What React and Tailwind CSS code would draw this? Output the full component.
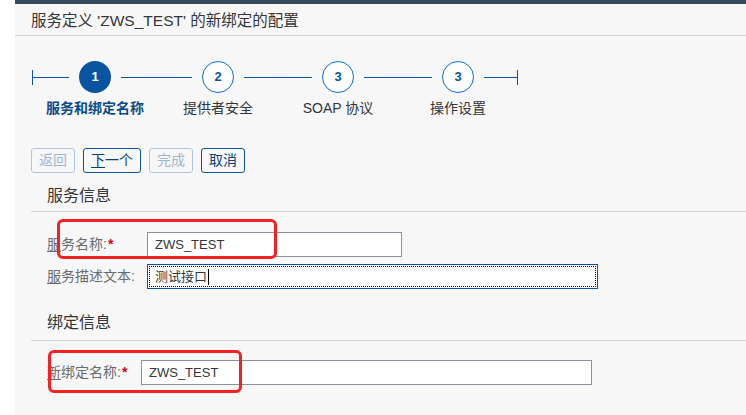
const FONT = { fontFamily: '"Liberation Sans", "Noto Sans CJK SC", sans-serif' };

const STEPS = [
  { n: '1', label: '服务和绑定名称', active: true },
  { n: '2', label: '提供者安全' },
  { n: '3', label: 'SOAP 协议' },
  { n: '3', label: '操作设置' },
];

function Line({ w }) {
  return (
    <div className="h-[32px] flex items-center" style={{ width: w }}>
      <div className="h-px w-full bg-[#0854a0]" />
    </div>
  );
}

function Step({ step }) {
  return (
    <div className="w-[32px] flex flex-col items-center mx-[10px]">
      <div
        className={
          step.active
            ? 'w-[32px] h-[32px] rounded-full bg-[#0854a0] text-white flex items-center justify-center text-[13px] font-bold'
            : 'w-[32px] h-[32px] rounded-full bg-white border border-[#0a6ed1] text-[#0854a0] flex items-center justify-center text-[13px] font-bold'
        }
      >
        {step.n}
      </div>
      <div
        className={
          step.active
            ? 'mt-[6px] whitespace-nowrap text-[14px] leading-[18px] font-bold text-[#0d4a8a]'
            : 'mt-[6px] whitespace-nowrap text-[14px] leading-[18px] text-[#32363a]'
        }
      >
        {step.label}
      </div>
    </div>
  );
}

function Btn({ children, w, disabled, first }) {
  return (
    <button
      className={
        disabled
          ? 'h-[25px] rounded-[3px] border border-[#a9c6e6] text-[#9fb6cf] text-[14px] flex items-center justify-center'
          : 'h-[25px] rounded-[3px] border border-[#0854a0] text-[#0a3f7a] text-[14px] flex items-center justify-center'
      }
      style={{ width: w }}
    >
      {first ? (
        <>
          <span className="underline underline-offset-2">{first}</span>
          {children}
        </>
      ) : (
        children
      )}
    </button>
  );
}

function Label({ first, rest, required, w }) {
  return (
    <div className="text-[14px] text-[#676b70] flex items-center shrink-0" style={{ width: w }}>
      <span className="underline underline-offset-2">{first}</span>
      {rest}
      {required && <span className="text-[#d0021b] font-bold ml-px">*</span>}
    </div>
  );
}

function Input({ value, w }) {
  return (
    <div
      className="h-[25px] bg-white border border-[#89919a] flex items-center px-[7px] text-[13px] text-[#32363a]"
      style={{ width: w }}
    >
      {value}
    </div>
  );
}

export default function App() {
  return (
    <div className="relative w-[746px] h-[415px] overflow-hidden bg-[#f7f7f7] flex" style={FONT}>
      <div className="w-[15px] bg-white shrink-0" />
      <div className="flex-1 flex flex-col">
        <div className="h-[4px] bg-[#354a5f]" />
        <div className="h-[32px] border-b border-[#d9d9d9] pl-[16px] flex items-center pt-[3px] text-[15.5px] text-[#32363a]">
          服务定义 'ZWS_TEST' 的新绑定的配置
        </div>

        {/* stepper */}
        <div className="flex items-start pl-[17px] mt-[25px]">
          <div className="w-[37px] h-[32px] flex items-center">
            <div className="w-px h-[15px] bg-[#0854a0]" />
            <div className="flex-1 h-px bg-[#0854a0]" />
          </div>
          <Step step={STEPS[0]} />
          <Line w={71} />
          <Step step={STEPS[1]} />
          <Line w={68} />
          <Step step={STEPS[2]} />
          <Line w={68} />
          <Step step={STEPS[3]} />
          <div className="w-[34px] h-[32px] flex items-center">
            <div className="flex-1 h-px bg-[#0854a0]" />
            <div className="w-px h-[15px] bg-[#0854a0]" />
          </div>
        </div>

        {/* buttons */}
        <div className="flex gap-[8px] pl-[16px] mt-[31px]">
          <Btn w={44} disabled>返回</Btn>
          <Btn w={58} first="下">一个</Btn>
          <Btn w={44} disabled>完成</Btn>
          <Btn w={44}>取消</Btn>
        </div>

        {/* service info */}
        <div className="ml-[16px] mt-[13px] border-b border-[#d9d9d9] pb-[5px] pl-[16px] text-[16px] leading-[20px] text-[#32363a]">
          服务信息
        </div>
        <div className="pl-[32px] mt-[20px] flex items-center">
          <Label first="服" rest="务名称:" required w={100} />
          <Input value="ZWS_TEST" w={255} />
        </div>
        <div className="pl-[32px] mt-[7px] flex items-center">
          <Label first="服" rest="务描述文本:" w={100} />
          <div className="w-[451px] h-[25px] bg-white border border-[#0854a0] p-px">
            <div className="h-full border border-dotted border-black flex items-center px-[5px] text-[13px] text-[#32363a]">
              测试接口
              <span className="w-px h-[16px] bg-black ml-px" />
            </div>
          </div>
        </div>

        {/* binding info */}
        <div className="ml-[16px] mt-[24px] border-b border-[#d9d9d9] pb-[7px] pl-[16px] text-[16px] leading-[20px] text-[#32363a]">
          绑定信息
        </div>
        <div className="pl-[32px] mt-[19px] flex items-center">
          <Label first="新" rest="绑定名称:" required w={94} />
          <Input value="ZWS_TEST" w={451} />
        </div>
      </div>

      {/* annotation boxes */}
      <div className="absolute left-[57px] top-[219px] w-[220px] h-[40px] border-[3px] border-[#f5201f] rounded-[6px]" />
      <div className="absolute left-[48px] top-[350px] w-[194px] h-[43px] border-[3px] border-[#f5201f] rounded-[6px]" />
    </div>
  );
}
